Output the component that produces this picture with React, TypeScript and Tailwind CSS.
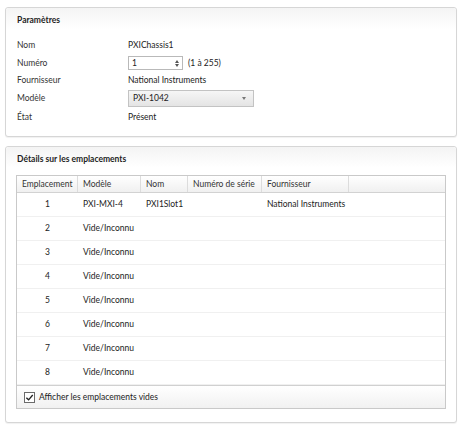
const slots = [
  { n: 1, model: "PXI-MXI-4", name: "PXI1Slot1", serial: "", vendor: "National Instruments" },
  { n: 2, model: "Vide/Inconnu", name: "", serial: "", vendor: "" },
  { n: 3, model: "Vide/Inconnu", name: "", serial: "", vendor: "" },
  { n: 4, model: "Vide/Inconnu", name: "", serial: "", vendor: "" },
  { n: 5, model: "Vide/Inconnu", name: "", serial: "", vendor: "" },
  { n: 6, model: "Vide/Inconnu", name: "", serial: "", vendor: "" },
  { n: 7, model: "Vide/Inconnu", name: "", serial: "", vendor: "" },
  { n: 8, model: "Vide/Inconnu", name: "", serial: "", vendor: "" },
];

const cols = ["w-[61px]", "w-[63px]", "w-[47px]", "w-[74px]", "w-[87px]", "flex-1"];

function Panel({ title, children, className }: { title: string; children: React.ReactNode; className?: string }) {
  return (
    <section className={"rounded-[3px] border border-[#d6d6d6] bg-white shadow-[0_1px_1px_rgba(0,0,0,0.06)] " + (className ?? "")}>
      <div className="flex h-[21px] items-end rounded-t-[3px] bg-gradient-to-b from-[#f4f4f4] to-white px-[11px] pb-[2px]">
        <h2 className="text-[8.5px] font-bold text-[#1e1e1e]">{title}</h2>
      </div>
      {children}
    </section>
  );
}

function Field({ label, children }: { label: string; children: React.ReactNode }) {
  return (
    <div className="flex h-[18px] items-center">
      <div className="w-[111px] text-[#333]">{label}</div>
      <div className="flex items-center">{children}</div>
    </div>
  );
}

export default function App() {
  return (
    <main
      className="min-h-screen whitespace-nowrap bg-white pl-[5px] pr-[17px] pt-[7px] text-[8.5px] text-[#222]"
      style={{ fontFamily: 'Lato, "Noto Sans", sans-serif' }}
    >
      <Panel title="Paramètres" className="h-[130px]">
        <div className="px-[11px] pt-[7px]">
          <Field label="Nom">PXIChassis1</Field>
          <Field label="Numéro">
            <div className="flex h-[14px] w-[55px] items-center justify-between border border-[#b9b9b9] bg-white pl-[3px]">
              <span>1</span>
              <div className="mr-[3px] flex flex-col items-center justify-center gap-[1px]">
                <span className="block h-0 w-0 border-x-[2px] border-b-[3px] border-x-transparent border-b-[#555]" />
                <span className="block h-0 w-0 border-x-[2px] border-t-[3px] border-x-transparent border-t-[#555]" />
              </div>
            </div>
            <span className="ml-[5px]">(1 à 255)</span>
          </Field>
          <div className="-mt-[1px]">
            <Field label="Fournisseur">National Instruments</Field>
          </div>
          <Field label="Modèle">
            <div className="flex h-[17px] w-[126px] items-center justify-between border border-[#c3c3c3] bg-gradient-to-b from-[#f6f6f6] to-[#e4e4e4] px-[4px]">
              <span>PXI-1042</span>
              <span className="mr-[3px] block h-0 w-0 border-x-[2px] border-t-[3px] border-x-transparent border-t-[#777]" />
            </div>
          </Field>
          <div className="mt-[1px]">
            <Field label="État">Présent</Field>
          </div>
        </div>
      </Panel>

      <Panel title="Détails sur les emplacements" className="mt-[9px] h-[277px]">
        <div className="mx-[10px] mt-[7px] border border-[#c9c9c9]">
          <div className="flex h-[17px] border-b border-[#d2d2d2] bg-gradient-to-b from-white to-[#f0f0f0]">
            {["Emplacement", "Modèle", "Nom", "Numéro de série", "Fournisseur", ""].map((h, i) => (
              <div
                key={i}
                className={cols[i] + " flex items-center border-r border-[#dcdcdc] px-[5px] text-[#333] last:border-r-0"}
              >
                {h}
              </div>
            ))}
          </div>
          {slots.map((s) => (
            <div key={s.n} className="flex h-[24px] border-b border-[#f0f0f0] bg-white">
              <div className={cols[0] + " flex items-center justify-center"}>{s.n}</div>
              <div className={cols[1] + " flex items-center px-[5px]"}>{s.model}</div>
              <div className={cols[2] + " flex items-center px-[5px]"}>{s.name}</div>
              <div className={cols[3] + " flex items-center px-[5px]"}>{s.serial}</div>
              <div className={cols[4] + " flex items-center px-[5px]"}>{s.vendor}</div>
              <div className={cols[5]} />
            </div>
          ))}
          <div className="flex h-[23px] items-center border-t border-[#d0d0d0] bg-gradient-to-b from-white to-[#f1f1f1] pl-[7px]">
            <span className="mr-[4px] flex h-[11px] w-[11px] items-center justify-center border border-[#6b6b6b] bg-white">
              <svg viewBox="0 0 10 10" className="h-[9px] w-[9px]">
                <path d="M1.5 5.2 L4 7.6 L8.6 2.2" fill="none" stroke="#222" strokeWidth="1.5" />
              </svg>
            </span>
            <span>Afficher les emplacements vides</span>
          </div>
        </div>
      </Panel>
    </main>
  );
}
